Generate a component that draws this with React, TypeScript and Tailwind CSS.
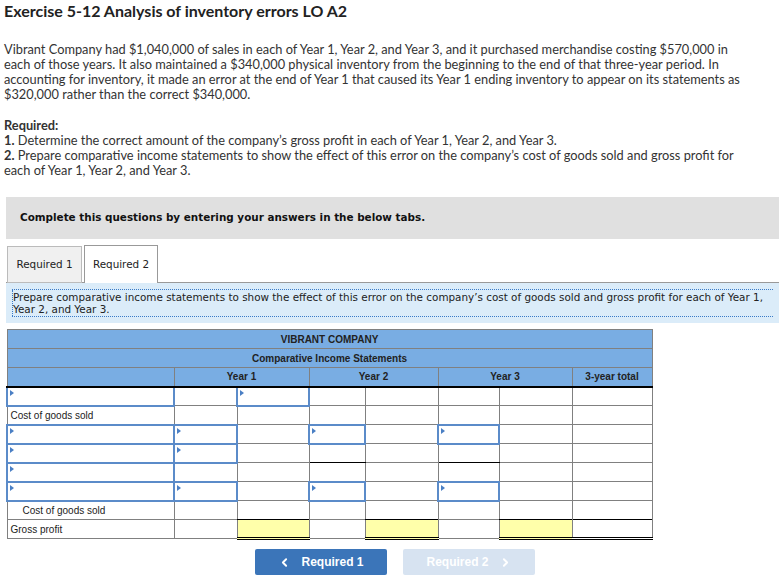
import { ChevronLeft, ChevronRight } from 'lucide-react';

// Cell kinds for the income-statement grid: plain, input, yellow total.
type Cell = '' | 'i' | 'y';

interface Row {
  label: string | null; // null → input box in the label column
  indent?: boolean;
  cells: Cell[];
  blackBottom?: number[]; // indexes (0-6) of value cells with a black underline
  doubleBottom?: number[];
}

const ROWS: Row[] = [
  { label: null, cells: ['', 'i', '', '', '', '', ''] },
  { label: 'Cost of goods sold', cells: ['', '', '', '', '', '', ''] },
  { label: null, cells: ['i', '', 'i', '', 'i', '', ''] },
  { label: null, cells: ['i', '', '', '', '', '', ''], blackBottom: [0, 2, 4] },
  { label: null, cells: ['', '', '', '', '', '', ''] },
  { label: null, cells: ['i', '', 'i', '', 'i', '', ''] },
  {
    label: 'Cost of goods sold',
    indent: true,
    cells: ['', '', '', '', '', '', ''],
    blackBottom: [1, 3, 5, 6],
  },
  {
    label: 'Gross profit',
    cells: ['', 'y', '', 'y', '', 'y', ''],
    doubleBottom: [1, 3, 5, 6],
  },
];

function Marker() {
  return (
    <span className="absolute left-[2px] top-[2px] h-0 w-0 border-y-[3px] border-l-[4px] border-y-transparent border-l-[#4a7fc4]" />
  );
}

function ValueCell({ kind, black, dbl }: { kind: Cell; black: boolean; dbl: boolean }) {
  if (kind === 'i') {
    return (
      <td className="relative border-2 border-[#5b8bc9] bg-white p-0">
        <Marker />
      </td>
    );
  }
  const bg = kind === 'y' ? 'bg-[#ffffaa]' : 'bg-white';
  const top = kind === 'y' || dbl ? 'border-t-black' : '';
  const bottom = dbl
    ? 'border-b-[3px] border-b-black border-double'
    : black
      ? 'border-b-black'
      : '';
  return <td className={`border border-[#808080] p-0 ${bg} ${top} ${bottom}`} />;
}

export default function App() {
  return (
    <div className="min-h-[585px] w-[779px] overflow-hidden bg-white text-[#333]">
      <div className="px-[4px] font-['Lato','Noto_Sans',sans-serif]">
        <h1 className="pt-[2px] text-[16px] font-bold leading-[18px] text-[#222]">
          Exercise 5-12 Analysis of inventory errors LO A2
        </h1>
        <p className="mt-[22px] whitespace-nowrap text-[12.8px] leading-[15px]">
          Vibrant Company had $1,040,000 of sales in each of Year 1, Year 2, and Year 3, and it purchased merchandise costing $570,000 in
          <br />
          each of those years. It also maintained a $340,000 physical inventory from the beginning to the end of that three-year period. In
          <br />
          accounting for inventory, it made an error at the end of Year 1 that caused its Year 1 ending inventory to appear on its statements as
          <br />
          $320,000 rather than the correct $340,000.
        </p>
        <div className="mt-[16px] whitespace-nowrap text-[12.8px] leading-[15px]">
          <div className="font-bold">Required:</div>
          <div>
            <span className="font-bold">1.</span> Determine the correct amount of the company’s gross profit in each of Year 1, Year 2, and Year 3.
          </div>
          <div>
            <span className="font-bold">2.</span> Prepare comparative income statements to show the effect of this error on the company’s cost of goods sold and gross profit for
          </div>
          <div>each of Year 1, Year 2, and Year 3.</div>
        </div>
      </div>

      <div className="pl-[6px] font-['DejaVu_Sans','Verdana',sans-serif]">
        <div className="mt-[19px] flex h-[42px] items-center bg-[#e0e0e0] pl-[14px] text-[10.4px] font-bold text-[#111]">
          Complete this questions by entering your answers in the below tabs.
        </div>

        <div className="mt-[6px] flex items-end gap-[2px] border-b border-[#999] pl-[1px]">
          <button
            type="button"
            className="-mb-px flex h-[37px] w-[75px] items-center justify-center border border-[#bbb] bg-[#f0f0f0] text-[10.4px] text-[#222]"
          >
            Required 1
          </button>
          <button
            type="button"
            className="-mb-px flex h-[38px] w-[74px] items-center justify-center border border-b-0 border-[#999] bg-white text-[10.4px] text-[#222]"
          >
            Required 2
          </button>
        </div>

        <div className="bg-[#dbecf9] px-[6px] py-[6px]">
          <div className="border-y border-dotted border-[#3a7bc8] text-[10.4px] leading-[12px] text-[#222]">
            <div className="whitespace-nowrap border-l border-dotted border-[#3a7bc8] py-px">
              Prepare comparative income statements to show the effect of this error on the company’s cost of goods sold and gross profit for each of Year 1,
              <br />
              Year 2, and Year 3.
            </div>
          </div>
        </div>

        <table className="mt-[6px] w-[645px] table-fixed border-collapse font-['Liberation_Sans','Arial',sans-serif] text-[10px] text-[#222]">
          <colgroup>
            <col className="w-[167px]" />
            <col className="w-[63px]" />
            <col className="w-[72px]" />
            <col className="w-[56px]" />
            <col className="w-[73px]" />
            <col className="w-[61px]" />
            <col className="w-[73px]" />
            <col className="w-[80px]" />
          </colgroup>
          <thead>
            <tr className="h-[19px] bg-[#79ade3] font-bold">
              <td colSpan={8} className="border border-[#808080] text-center">
                VIBRANT COMPANY
              </td>
            </tr>
            <tr className="h-[19px] bg-[#79ade3] font-bold">
              <td colSpan={8} className="border border-[#808080] text-center">
                Comparative Income Statements
              </td>
            </tr>
            <tr className="h-[19px] bg-[#79ade3] font-bold">
              <td className="border border-b-2 border-[#808080] border-b-black" />
              <td colSpan={2} className="border border-b-2 border-[#808080] border-b-black text-center">
                Year 1
              </td>
              <td colSpan={2} className="border border-b-2 border-[#808080] border-b-black text-center">
                Year 2
              </td>
              <td colSpan={2} className="border border-b-2 border-[#808080] border-b-black text-center">
                Year 3
              </td>
              <td className="border border-b-2 border-[#808080] border-b-black text-center">
                3-year total
              </td>
            </tr>
          </thead>
          <tbody>
            {ROWS.map((row, r) => (
              <tr key={r} className="h-[19px]">
                {row.label === null ? (
                  <td className="relative border-2 border-[#5b8bc9] bg-white p-0">
                    <Marker />
                  </td>
                ) : (
                  <td
                    className={`border border-[#808080] bg-white py-0 pr-1 ${
                      row.indent ? 'pl-[15px]' : 'pl-[3px]'
                    }`}
                  >
                    {row.label}
                  </td>
                )}
                {row.cells.map((kind, c) => (
                  <ValueCell
                    key={c}
                    kind={kind}
                    black={row.blackBottom?.includes(c) ?? false}
                    dbl={row.doubleBottom?.includes(c) ?? false}
                  />
                ))}
              </tr>
            ))}
          </tbody>
        </table>

        <div className="mt-[9px] flex gap-[16px] pl-[249px] font-['Liberation_Sans','Arial',sans-serif]">
          <button
            type="button"
            className="flex h-[26px] w-[132px] items-center justify-center gap-[10px] rounded-[2px] bg-[#3b75b9] text-[12px] font-bold text-white"
          >
            <ChevronLeft size={13} strokeWidth={3.5} />
            Required 1
          </button>
          <button
            type="button"
            disabled
            className="flex h-[26px] w-[132px] items-center justify-center gap-[10px] rounded-[2px] bg-[#d7e3f1] text-[12px] font-bold text-white"
          >
            Required 2
            <ChevronRight size={13} strokeWidth={3.5} />
          </button>
        </div>
      </div>
    </div>
  );
}
